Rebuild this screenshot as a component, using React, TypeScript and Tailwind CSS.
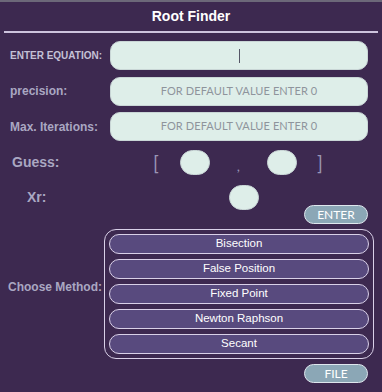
import { ReactNode } from "react";

const methods = ["Bisection", "False Position", "Fixed Point", "Newton Raphson", "Secant"];

function Field({ label, labelClass, placeholder, caret }: { label: string; labelClass: string; placeholder?: string; caret?: boolean }) {
  return (
    <div className="flex items-center h-[29px]">
      <div className={`w-[106px] pl-[6px] font-bold whitespace-nowrap ${labelClass}`}>{label}</div>
      <div className="w-[258px] h-[29px] rounded-[10px] bg-[#deeee9] border border-[#c9d6d6] flex items-center justify-center">
        {caret && <span className="w-[1px] h-[14px] bg-[#556]" />}
        {placeholder && (
          <span className="text-[11px] text-[#8e949c] font-['Lato',sans-serif] tracking-[0.1px]">{placeholder}</span>
        )}
      </div>
    </div>
  );
}

function Oval() {
  return <div className="w-[30px] h-[25px] rounded-full bg-[#deeee9] border border-[#c9d6d6]" />;
}

function Pill({ children }: { children: ReactNode }) {
  return (
    <button className="block w-[64px] h-[19px] rounded-full bg-[#8ba7b6] border border-[#dfe7ee] text-white text-[12px] leading-none font-['Lato',sans-serif]">
      {children}
    </button>
  );
}

export default function App() {
  return (
    <div className="w-[382px] h-[392px] bg-[#3d2950] border-t-2 border-[#6c6879] px-[4px] font-['Liberation_Sans',Arial,sans-serif] overflow-hidden">
      {/* Title */}
      <div className="h-[29px] flex items-center justify-center text-white font-bold text-[14px]">Root Finder</div>
      <div className="h-[2px] bg-[#cdc3dd]" />

      {/* Inputs */}
      <div className="flex flex-col gap-[6.5px] mt-[8px]">
        <Field label="ENTER EQUATION:" labelClass="text-[10px] text-[#c4c1d6]" caret />
        <Field label="precision:" labelClass="text-[12px] text-[#aaa7c2]" placeholder="FOR DEFAULT VALUE ENTER 0" />
        <Field label="Max. Iterations:" labelClass="text-[12px] text-[#aaa7c2]" placeholder="FOR DEFAULT VALUE ENTER 0" />
      </div>

      {/* Guess */}
      <div className="flex items-center h-[25px] mt-[9px]">
        <div className="w-[106px] pl-[8px] font-bold text-[14px] text-[#aaa7c2]">Guess:</div>
        <div className="flex items-center h-[25px] text-[#9a95b5] text-[19px] leading-none font-['Lato',sans-serif]">
          <span className="ml-[43px]">[</span>
          <div className="ml-[21px]"><Oval /></div>
          <span className="ml-[27px] text-[14px] mt-[6px]">,</span>
          <div className="ml-[27px]"><Oval /></div>
          <span className="ml-[20px]">]</span>
        </div>
      </div>

      {/* Xr + Enter */}
      <div className="flex items-start mt-[10px]">
        <div className="w-[106px] pl-[23px] h-[25px] flex items-center font-bold text-[14px] text-[#aaa7c2]">Xr:</div>
        <div className="ml-[119px]"><Oval /></div>
        <div className="flex ml-auto mr-[10px] mt-[20px]"><Pill>ENTER</Pill></div>
      </div>

      {/* Methods */}
      <div className="flex items-center mt-[5px]">
        <div className="w-[100px] pl-[4px] mb-[14px] font-bold text-[12px] text-[#aaa7c2] whitespace-nowrap">Choose Method:</div>
        <div className="w-[270px] h-[130px] rounded-[12px] border-[1.5px] border-[#d9d0e8] px-[4px] pt-[4px] flex flex-col gap-[5px]">
          {methods.map((m) => (
            <button
              key={m}
              className="h-[20px] shrink-0 rounded-full bg-[#584a7e] border-[1.5px] border-[#d9d0e8] text-white text-[11.5px] leading-none"
            >
              {m}
            </button>
          ))}
        </div>
      </div>

      <div className="flex justify-end mt-[5px] mr-[10px]">
        <Pill>FILE</Pill>
      </div>
    </div>
  );
}
